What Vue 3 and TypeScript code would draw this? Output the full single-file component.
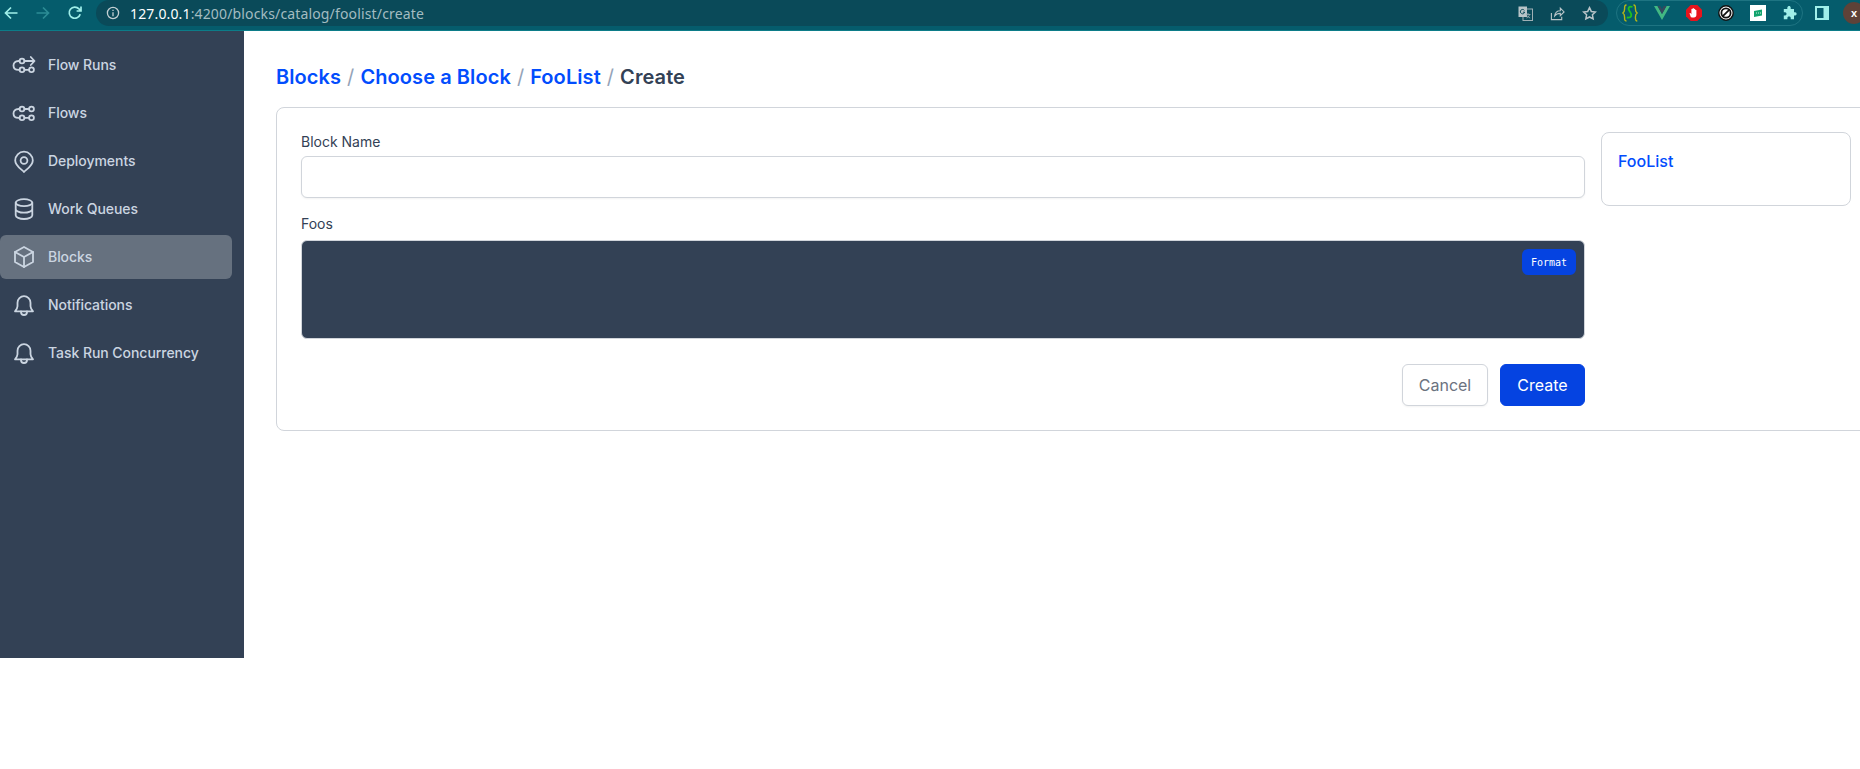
<template>
  <div class="screen">
    <!-- Browser chrome -->
    <header class="chrome">
      <div class="nav-buttons">
        <svg class="nav-icon" viewBox="0 0 16 16"><path d="M14.500 8H2.500M8 2.500 2.500 8 8 13.500" /></svg>
        <svg class="nav-icon dim" viewBox="0 0 16 16"><path d="M1.500 8h12M8 2.500 13.500 8 8 13.500" /></svg>
        <svg class="nav-icon" viewBox="0 0 16 16"><path d="M13.200 9.200A5.600 5.600 0 1 1 12 3.900L14 6M14 1.600V6H9.600" /></svg>
      </div>
      <div class="omnibox">
        <svg class="info-icon" viewBox="0 0 14 14">
          <circle cx="7" cy="7" r="5.600" />
          <path d="M7 6.200v4M7 3.800v1.200" />
        </svg>
        <span class="url"><span class="host">127.0.0.1</span>:4200/blocks/catalog/foolist/create</span>
        <div class="omni-actions">
          <svg class="omni-icon" viewBox="0 0 15 15">
            <rect x="5" y="3" width="9.500" height="11.500" fill="none" stroke="#9fb0b5" stroke-width="1" />
            <rect x="0.500" y="0.500" width="8.500" height="10.500" fill="#b8c4c8" stroke="none" />
            <path d="M6.400 4.400A2.200 2.200 0 1 0 6.700 6.200H4.900" fill="none" stroke="#0a4a59" stroke-width="1" />
            <path d="M10 7v1M8 8.500h4.500M11.500 8.500c-.500 2-1.500 3-3 3.500M9 9.500c.700 1.200 1.800 2 3.200 2.500" stroke="#9fb0b5" stroke-width="0.800" fill="none" />
          </svg>
          <svg class="omni-icon" viewBox="0 0 16 16"><path d="M1.500 7.500v7h11v-3M5 10.500c.4-3.600 3-5.500 6-5.500V2.300l4 4-4 4V7.800c-2.600 0-4.600.8-6 2.700Z" /></svg>
          <svg class="omni-icon star" viewBox="0 0 16 16"><path d="m8 1.800 1.900 4 4.400.6-3.200 3 .8 4.400L8 11.700l-3.900 2.100.8-4.400-3.200-3 4.400-.6Z" /></svg>
        </div>
      </div>
      <div class="extensions">
        <svg class="ext-icon json" viewBox="0 0 16 18">
          <path d="M4.500 1C2.500 1 2.600 2.500 2.600 4.500S2.700 8 .8 9c1.900 1 1.800 2.500 1.800 4.500s-.1 3.500 1.900 3.500M11.500 1c2 0 1.900 1.500 1.900 3.500s-.1 3.500 1.800 4.500c-1.900 1-1.800 2.500-1.800 4.500s.1 3.500 1.900 3.500" fill="none" stroke="#b7b515" stroke-width="1.400" />
          <path d="M10.500 3C7 1.800 5.200 4.200 7.800 7.500c2.600 3.300 2 7-3 6" fill="none" stroke="#1fc11f" stroke-width="1.800" />
        </svg>
        <svg class="ext-icon" viewBox="0 0 16 14">
          <path d="M0 0h3.500L8 8l4.500-8H16L8 14Z" fill="#42b883" />
          <path d="M3.500 0h2.700L8 3.200 9.800 0h2.700L8 8Z" fill="#35495e" />
        </svg>
        <svg class="ext-icon" viewBox="0 0 16 16">
          <path d="M4.700 0h6.600L16 4.700v6.600L11.300 16H4.700L0 11.300V4.700Z" fill="#e8141c" />
          <path d="M5 12.500 3.600 8.800c-.3-.8.7-1.200 1.100-.5l.7 1.200V4.500c0-.9 1.200-.9 1.200 0V3.600c0-.9 1.300-.9 1.300 0v.9c0-.9 1.300-.9 1.300 0v.8c0-.8 1.200-.8 1.200 0v4.500c0 1.800-1 2.800-2.500 2.800H6.500c-.7 0-1.200-.1-1.500-.6Z" fill="#fff" />
        </svg>
        <svg class="ext-icon" viewBox="0 0 16 16">
          <circle cx="8" cy="8" r="7.200" fill="#fff" stroke="#111" stroke-width="1.400" />
          <circle cx="8" cy="8" r="4.600" fill="none" stroke="#111" stroke-width="1.800" />
          <path d="M4.800 11.200 11.200 4.800" stroke="#111" stroke-width="1.800" />
        </svg>
        <svg class="ext-icon" viewBox="0 0 16 16">
          <rect width="16" height="16" fill="#fff" />
          <path d="m4 6 8-1.500v6L4 12Z" fill="#12a36d" />
          <path d="M6 8h.8M8 8h.8M10 8h.8" stroke="#fff" stroke-width="1" />
        </svg>
        <svg class="ext-icon" viewBox="0 0 16 16">
          <path d="M6 1.500c1-1 2.700-.3 2.700 1.200V4h3.300v3.200h1.200c1.900 0 1.900 3.200 0 3.200H12v3.800H8.700v-1.300c0-1.900-3.300-1.900-3.300 0v1.300H1.800v-3.800h1.300c1.900 0 1.900-3.200 0-3.200H1.800V4h3.500V2.700c0-.5.3-.9.700-1.200Z" fill="#a0efe9" />
        </svg>
      </div>
      <svg class="panel-icon" viewBox="0 0 14 14">
        <rect x="0" y="0" width="14" height="14" fill="#a0efe9" />
        <rect x="2" y="2" width="6.500" height="10" fill="#055c6c" />
      </svg>
      <span class="avatar">x</span>
    </header>

    <div class="app-body">
      <!-- Sidebar -->
      <aside class="sidebar">
        <a
          v-for="item in navItems"
          :key="item.label"
          class="nav-item"
          :class="{ active: item.label === 'Blocks' }"
        >
          <svg class="side-icon" viewBox="0 0 24 24" v-html="icons[item.icon]"></svg>
          <span class="nav-label">{{ item.label }}</span>
        </a>
      </aside>

      <!-- Page -->
      <main class="page">
        <nav class="crumbs">
          <a>Blocks</a>
          <span class="sep">/</span>
          <a>Choose a Block</a>
          <span class="sep">/</span>
          <a>FooList</a>
          <span class="sep">/</span>
          <span class="current">Create</span>
        </nav>

        <section class="card">
          <div class="form-col">
            <label class="field-label">Block Name</label>
            <input class="text-input" type="text" />

            <label class="field-label foos">Foos</label>
            <div class="editor">
              <button class="format-btn">Format</button>
            </div>

            <div class="actions">
              <button class="btn cancel">Cancel</button>
              <button class="btn create">Create</button>
            </div>
          </div>

          <div class="side-card">
            <a class="side-title">FooList</a>
          </div>
        </section>
      </main>
    </div>
  </div>
</template>

<script setup lang="ts">
type IconName = 'flowRuns' | 'flows' | 'pin' | 'database' | 'cube' | 'bell'

const navItems: { label: string; icon: IconName }[] = [
  { label: 'Flow Runs', icon: 'flowRuns' },
  { label: 'Flows', icon: 'flows' },
  { label: 'Deployments', icon: 'pin' },
  { label: 'Work Queues', icon: 'database' },
  { label: 'Blocks', icon: 'cube' },
  { label: 'Notifications', icon: 'bell' },
  { label: 'Task Run Concurrency', icon: 'bell' },
]

const icons: Record<IconName, string> = {
  flowRuns:
    '<circle cx="10" cy="8" r="2.400"/><circle cx="10" cy="16.800" r="2.400"/><circle cx="19.500" cy="16.800" r="2.400"/><path d="M12.400 8h10M18.800 4l3.700 4-3.700 4M12.400 16.800h4.700M7.600 8H6.500C3 8 1.500 10 1.500 12.400s1.500 4.400 5 4.400h1.100"/>',
  flows:
    '<circle cx="10" cy="8" r="2.400"/><circle cx="19.500" cy="8" r="2.400"/><circle cx="10" cy="16.800" r="2.400"/><circle cx="19.500" cy="16.800" r="2.400"/><path d="M12.400 8h4.700M12.400 16.800h4.700M7.600 8H6.500C3 8 1.500 10 1.500 12.400s1.500 4.400 5 4.400h1.100"/>',
  pin:
    '<path d="M12 23c-2-2.500-8.800-6-8.800-11.500a8.800 8.800 0 0 1 17.600 0c0 5.500-6.800 9-8.800 11.500Z"/><circle cx="12" cy="11.500" r="3.400"/>',
  database:
    '<ellipse cx="12" cy="5.700" rx="8.300" ry="3.500"/><path d="M3.700 5.700v12.600c0 2 3.700 3.700 8.300 3.700s8.300-1.700 8.300-3.700V5.700M3.700 12c0 2 3.700 3.700 8.300 3.700s8.300-1.700 8.300-3.700"/>',
  cube:
    '<path d="M12 2 21 7v10l-9 5-9-5V7Z"/><path d="M3 7l9 5 9-5M12 12v10"/>',
  bell:
    '<path d="M12 3.200a6.500 6.500 0 0 0-6.500 6.500v3.600c0 2-1.300 3.600-2.500 5h18c-1.200-1.400-2.500-3-2.500-5V9.700A6.500 6.500 0 0 0 12 3.200Z"/><path d="M9 18.300v.7a3 3 0 0 0 6 0v-.7"/>',
}
</script>

<style scoped>
.screen {
  width: 1860px;
  height: 769px;
  overflow: hidden;
  background: #fff;
  font-family: Inter, 'Noto Sans', sans-serif;
  display: flex;
  flex-direction: column;
}

/* Browser chrome */
.chrome {
  height: 31px;
  flex: none;
  display: flex;
  align-items: center;
  box-sizing: border-box;
  padding-bottom: 4px;
  background: #055c6c;
  border-bottom: 1px solid #0c7c88;
}

.nav-buttons {
  display: flex;
  align-items: center;
  gap: 16px;
  padding-left: 3px;
  width: 96px;
  box-sizing: border-box;
  flex: none;
}

.nav-icon {
  width: 16px;
  height: 16px;
  flex: none;
  fill: none;
  stroke: #a0efe9;
  stroke-width: 1.700;
}

.nav-icon.dim {
  stroke: #2c8c95;
}

.omnibox {
  width: 1512px;
  height: 26px;
  flex: none;
  border-radius: 13px;
  background: #0a4a59;
  display: flex;
  align-items: center;
  padding-left: 10px;
  box-sizing: border-box;
}

.info-icon {
  width: 14px;
  height: 14px;
  flex: none;
  fill: none;
  stroke: #c3d0d3;
  stroke-width: 1.300;
}

.url {
  margin-left: 10px;
  font-family: 'Noto Sans', 'Open Sans', sans-serif;
  font-size: 14px;
  letter-spacing: 0.15px;
  color: #a3bcc1;
  white-space: nowrap;
}

.host {
  color: #fff;
}

.omni-actions {
  margin-left: auto;
  display: flex;
  gap: 17px;
  padding-right: 11px;
  align-items: center;
}

.omni-icon {
  width: 15px;
  height: 15px;
  fill: none;
  stroke: #b8c4c8;
  stroke-width: 1.200;
}

.omni-icon.star {
  stroke-width: 1.600;
}

.extensions {
  width: 187px;
  height: 26px;
  flex: none;
  margin-left: 8px;
  border: 1px solid #1e7482;
  border-radius: 13px;
  box-sizing: border-box;
  display: flex;
  align-items: center;
  gap: 16px;
  padding-left: 5px;
}

.ext-icon {
  width: 16px;
  height: 16px;
  flex: none;
}

.ext-icon.json {
  height: 18px;
}

.panel-icon {
  width: 14px;
  height: 14px;
  flex: none;
  margin-left: 12px;
}

.avatar {
  width: 22px;
  height: 22px;
  flex: none;
  margin-left: 14px;
  border-radius: 50%;
  background: #5e4238;
  color: #fff;
  font-family: 'Liberation Sans', sans-serif;
  font-size: 11px;
  font-weight: 700;
  display: flex;
  align-items: center;
  justify-content: center;
}

.app-body {
  display: flex;
  height: 627px;
  flex: none;
}

/* Sidebar */
.sidebar {
  width: 244px;
  flex: none;
  background: #334155;
  padding: 12px 12px 0 0;
  box-sizing: border-box;
  display: flex;
  flex-direction: column;
  gap: 4px;
}

.nav-item {
  height: 44px;
  display: flex;
  align-items: center;
  gap: 12px;
  padding-left: 12px;
  font-size: 14px;
  font-weight: 500;
  letter-spacing: -0.05px;
  color: #cbd5e1;
}

.nav-label {
  margin-bottom: 2px;
}

.nav-item.active {
  background: #66717f;
  border-radius: 6px;
}

.side-icon {
  width: 24px;
  height: 24px;
  flex: none;
  fill: none;
  stroke: #cbd5e1;
  stroke-width: 1.800;
  stroke-linecap: round;
  stroke-linejoin: round;
}

/* Page */
.page {
  flex: 1;
  min-width: 0;
  overflow: hidden;
  padding: 32px 0 0 32px;
}

.crumbs {
  display: flex;
  align-items: center;
  gap: 6px;
  font-size: 20px;
  font-weight: 600;
  letter-spacing: 0.08px;
  line-height: 28px;
  color: #334155;
}

.crumbs a {
  color: #024dfd;
}

.sep {
  color: #94a3b8;
  font-weight: 400;
}

.card {
  width: 1600px;
  margin-top: 16px;
  padding: 24px;
  box-sizing: border-box;
  border: 1px solid #d1d5db;
  border-radius: 8px;
  display: grid;
  grid-template-columns: 1fr 250px;
  gap: 16px;
  align-items: start;
}

.field-label {
  display: block;
  font-size: 14px;
  font-weight: 400;
  line-height: 20px;
  color: #334155;
}

.field-label.foos {
  margin-top: 16px;
}

.text-input {
  display: block;
  width: 100%;
  height: 42px;
  margin-top: 4px;
  box-sizing: border-box;
  border: 1px solid #d1d5db;
  border-radius: 6px;
  background: #fff;
  box-shadow: 0 1px 2px rgba(0, 0, 0, 0.05);
}

.editor {
  height: 99px;
  margin-top: 6px;
  position: relative;
  background: #334155;
  border: 1px solid #d1d5db;
  border-radius: 6px;
  box-sizing: border-box;
}

.format-btn {
  position: absolute;
  top: 8px;
  right: 8px;
  width: 54px;
  height: 26px;
  padding: 0;
  border: none;
  border-radius: 6px;
  background: #0543e1;
  color: #fff;
  font-family: 'DejaVu Sans Mono', monospace;
  font-size: 10px;
}

.actions {
  display: flex;
  justify-content: flex-end;
  gap: 12px;
  margin-top: 25px;
}

.btn {
  height: 42px;
  box-sizing: border-box;
  border-radius: 6px;
  font-family: Inter, sans-serif;
  font-size: 16px;
  font-weight: 400;
  padding: 0;
}

.cancel {
  width: 86px;
  background: #fff;
  border: 1px solid #d1d5db;
  color: #6b7280;
  box-shadow: 0 1px 2px rgba(0, 0, 0, 0.05);
}

.create {
  width: 85px;
  background: #0543e1;
  border: 1px solid #0543e1;
  color: #fff;
}

.side-card {
  height: 74px;
  box-sizing: border-box;
  border: 1px solid #d1d5db;
  border-radius: 8px;
  padding: 16px;
}

.side-title {
  display: block;
  font-size: 16px;
  font-weight: 500;
  line-height: 24px;
  color: #024dfd;
}
</style>
